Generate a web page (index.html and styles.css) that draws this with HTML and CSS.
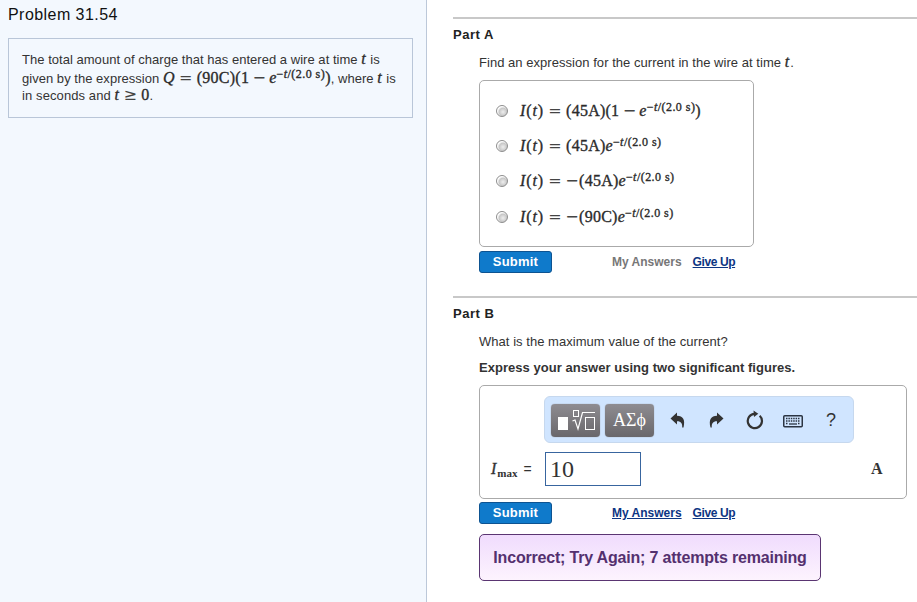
FILE: index.html
```html
<!DOCTYPE html>
<html>
<head>
    <meta charset="UTF-8">
    <title>Problem 31.54</title>
    <link rel="stylesheet" href="styles.css">
</head>
<body>
<div id="wrap">
    <!-- problem statement -->
    <div class="side">
        <h1>Problem 31.54</h1>
        <div class="intro">
            <p class="l1">The total amount of charge that has entered a wire at time <i class="m">t</i> is</p>
            <p class="l2">given by the expression <span class="m"><i>Q</i><b class="op">=</b>(90C)(1<b class="op minus">−</b><i>e</i><sup>−<i>t</i>/(2.0 s)</sup>)</span>, where <i class="m">t</i> is</p>
            <p class="l3">in seconds and <span class="m"><i>t</i><b class="op">≥</b>0</span>.</p>
        </div>
    </div>

    <div class="main">
        <!-- Part A -->
        <div class="part partA">
            <h2>Part A</h2>
            <p class="ask">Find an expression for the current in the wire at time <i class="m">t</i>.</p>
            <ul class="choices">
                <li><span class="radio"></span><span class="m"><span class="fn"><i>I</i>(<i>t</i>)</span><b class="op">=</b>(45A)(1<b class="op minus">−</b><i>e</i><sup>−<i>t</i>/(2.0 s)</sup>)</span></li>
                <li><span class="radio"></span><span class="m"><span class="fn"><i>I</i>(<i>t</i>)</span><b class="op">=</b>(45A)<i>e</i><sup>−<i>t</i>/(2.0 s)</sup></span></li>
                <li><span class="radio"></span><span class="m"><span class="fn"><i>I</i>(<i>t</i>)</span><b class="op">=</b><b class="op neg">−</b>(45A)<i>e</i><sup>−<i>t</i>/(2.0 s)</sup></span></li>
                <li><span class="radio"></span><span class="m"><span class="fn"><i>I</i>(<i>t</i>)</span><b class="op">=</b><b class="op neg">−</b>(90C)<i>e</i><sup>−<i>t</i>/(2.0 s)</sup></span></li>
            </ul>
            <div class="actions">
                <button class="submit">Submit</button>
                <span class="link off">My Answers</span>
                <a class="link give">Give Up</a>
            </div>
        </div>

        <!-- Part B -->
        <div class="part partB">
            <h2>Part B</h2>
            <p class="ask">What is the maximum value of the current?</p>
            <p class="ask strong">Express your answer using two significant figures.</p>
            <div class="answer">
                <div class="toolbar">
                    <div class="key">
                        <svg width="49" height="33" viewBox="0 0 49 33">
                            <rect x="7" y="13" width="10" height="13" fill="#fff"/>
                            <path d="M21.500 17l2.500-1 3 9L31.500 8.500H44" fill="none" stroke="#fff" stroke-width="1.200"/>
                            <rect x="22.500" y="6.500" width="5" height="6" fill="none" stroke="#fff"/>
                            <rect x="34.500" y="13.500" width="9" height="12" fill="none" stroke="#fff"/>
                        </svg>
                    </div>
                    <div class="key greek">ΑΣϕ</div>
                    <svg class="tool" width="16" height="16" viewBox="0 0 16 16">
                        <path d="M0.500 6.500L7 0.500v3.300c6 0 8.500 4 6.500 11.700h-1.300c0.300-4-1.200-6.300-5.200-6.200V12.500z"/>
                    </svg>
                    <svg class="tool" width="16" height="16" viewBox="0 0 16 16">
                        <path d="M15.500 6.500L9 0.500v3.300c-6 0-8.500 4-6.500 11.700h1.300c-0.300-4 1.200-6.300 5.200-6.200V12.500z"/>
                    </svg>
                    <svg class="tool reset" width="18" height="20" viewBox="0 0 18 20">
                        <path d="M13.700 5.800A7.100 7.100 0 1 1 8.500 3.900" fill="none" stroke="#333" stroke-width="2.200"/>
                        <path d="M7.500 0.500l4.800 3.200-4.300 3.300z"/>
                    </svg>
                    <svg class="tool board" width="20" height="13" viewBox="0 0 20 13">
                        <rect x="0.750" y="0.750" width="18.500" height="11" rx="1" fill="none" stroke="#2b3442" stroke-width="1.500"/>
                        <path d="M3 3.500h14M3 6h14M3 8.500h2M15 8.500h2" fill="none" stroke="#2b3442" stroke-width="1.300" stroke-dasharray="1.500 0.900"/>
                        <path d="M6 9h8" stroke="#2b3442" stroke-width="1.300"/>
                    </svg>
                    <span class="help">?</span>
                </div>
                <div class="field">
                    <span class="label"><i>I</i><sub>max</sub><span class="eq">=</span></span>
                    <span class="input">10</span>
                    <span class="unit">A</span>
                </div>
            </div>
            <div class="actions">
                <button class="submit">Submit</button>
                <a class="link">My Answers</a>
                <a class="link give">Give Up</a>
            </div>
            <div class="feedback">Incorrect; Try Again; 7 attempts remaining</div>
        </div>
    </div>
</div>
</body>
</html>
```
FILE: styles.css
```css
body{
    margin:0;
    font-family:"Liberation Sans",Arial,sans-serif;
    font-size:13px;
    color:#333;
    background:#fff;
}
h1,h2,p,ul,li{margin:0;padding:0;list-style:none;}
*{box-sizing:border-box;}
#wrap{
    display:flex;
    width:917px;
    height:602px;
    overflow:hidden;
}

/* left column */
.side{
    width:427px;
    padding:5px 13px 0 8px;
    background:#f3f8fe;
    border-right:1px solid #bcc8d9;
}
h1{
    font-size:16px;
    font-weight:normal;
    line-height:19px;
    color:#111;
    letter-spacing:0.45px;
}
.intro{
    height:80px;
    margin-top:14px;
    padding:11px 13px;
    border:1px solid #b9c6d8;
    white-space:nowrap;
}
.intro p{line-height:19px;height:19px;letter-spacing:0.03px;}
.intro .l2{height:17px;}
.intro .l3{letter-spacing:0.1px;}

/* formulas */
.m{
    font-family:"Liberation Serif","Times New Roman",serif;
    font-size:16px;
    line-height:1;
    color:#2b2b2b;
    -webkit-text-stroke:0.35px #2b2b2b;
    letter-spacing:0.25px;
}
i.m{letter-spacing:1px;}
.m .fn{letter-spacing:0.9px;}
.m .op{
    display:inline-block;
    width:22px;
    text-align:center;
    font-family:"DejaVu Sans",sans-serif;
    font-weight:normal;
    font-size:16px;
    line-height:1;
    color:#444;
    -webkit-text-stroke:0;
    letter-spacing:0;
}
.m .minus{width:20px;}
.m .neg{width:14px;margin-left:-1px;}
.m sup{
    font-size:12px;
    line-height:0;
    vertical-align:5px;
    letter-spacing:0.45px;
}

/* right column */
.main{
    flex:1;
    padding:17px 0 0 26px;
}
.part{border-top:2px solid #c8c8c8;}
.partA{height:279px;}
h2{
    margin-top:8px;
    font-size:13px;
    line-height:16px;
    color:#222;
    letter-spacing:0.5px;
}
.ask{
    margin:10px 0 0 26px;
    line-height:19px;
    letter-spacing:0.04px;
    white-space:nowrap;
}
.choices{
    width:275px;
    height:167px;
    margin:8px 0 0 26px;
    padding:12px 0 0 16px;
    border:1px solid #aaa;
    border-radius:5px;
}
.choices li{
    display:flex;
    align-items:center;
    height:35.4px;
    white-space:nowrap;
}
.radio{
    width:12px;
    height:12px;
    margin-right:12px;
    border:1px solid #8d8d8d;
    border-radius:50%;
    background:radial-gradient(circle at 60% 60%,#eee 0,#c8c8c8 45%,#fff 65%);
}
.actions{
    display:flex;
    align-items:center;
    height:22px;
    margin:4px 0 0 26px;
}
.submit{
    width:73px;
    height:22px;
    margin-right:60px;
    padding:0 0 1px;
    border:1px solid #0d5391;
    border-radius:3px;
    background:#0f7acb;
    font:bold 13px "Liberation Sans",Arial,sans-serif;
    letter-spacing:0.2px;
    color:#fff;
}
.link{
    margin-right:11px;
    font-size:12px;
    font-weight:bold;
    color:#0d3583;
    text-decoration:underline;
}
.link.off{color:#777;text-decoration:none;}
.give{letter-spacing:-0.4px;}

/* answer box */
.partB .ask{margin-top:10px;}
.partB .strong{margin-top:7px;font-weight:bold;}
.answer{
    width:428px;
    height:114px;
    margin:8px 0 0 26px;
    padding:10px 0 0 11px;
    border:1px solid #aaa;
    border-radius:5px;
}
.partB .actions{margin-top:3px;}
.toolbar{
    display:flex;
    align-items:center;
    width:310px;
    height:47px;
    margin-left:53px;
    padding-left:6px;
    border:1px solid #c6d8ee;
    border-radius:6px;
    background:#d0e5ff;
}
.key{
    width:49px;
    height:33px;
    margin-top:1px;
    margin-right:5px;
    border-radius:4px;
    background:linear-gradient(#8e8c91,#69676b);
    box-shadow:0 0 1px #777;
    color:#fff;
}
.key svg{display:block;}
.greek{
    margin-right:16px;
    font:18px/32px "Liberation Serif","DejaVu Serif",serif;
    text-align:center;
}
.tool{
    margin-right:22px;
    fill:#333;
}
.reset{margin:0 19px 0 0;}
.board{margin:3px 23px 0 0;}
.help{
    font-size:18px;
    line-height:20px;
}
.field{
    display:flex;
    align-items:center;
    height:34px;
    margin-top:9px;
}
.label{
    width:54px;
    font:bold 16px/20px "Liberation Serif",serif;
    white-space:nowrap;
}
.label i{
    font-weight:normal;
    letter-spacing:1px;
    -webkit-text-stroke:0.35px #333;
}
.label sub{
    font-size:11px;
    line-height:0;
    vertical-align:-3px;
}
.label .eq{margin-left:6px;font:14px "Liberation Sans",sans-serif;}
.input{
    width:96px;
    height:34px;
    padding-left:4px;
    border:1px solid #38659f;
    font:24px/32px "Liberation Serif",serif;
}
.unit{
    margin-left:230px;
    font:bold 16px/20px "Liberation Serif",serif;
}
.feedback{
    width:342px;
    height:47px;
    margin:10px 0 0 26px;
    border:1px solid #5a3572;
    border-radius:5px;
    background:linear-gradient(#f0dcfd,#fdf3fe);
    font-size:16px;
    font-weight:bold;
    line-height:45px;
    letter-spacing:-0.19px;
    text-align:center;
    color:#54306f;
    white-space:nowrap;
}
```
